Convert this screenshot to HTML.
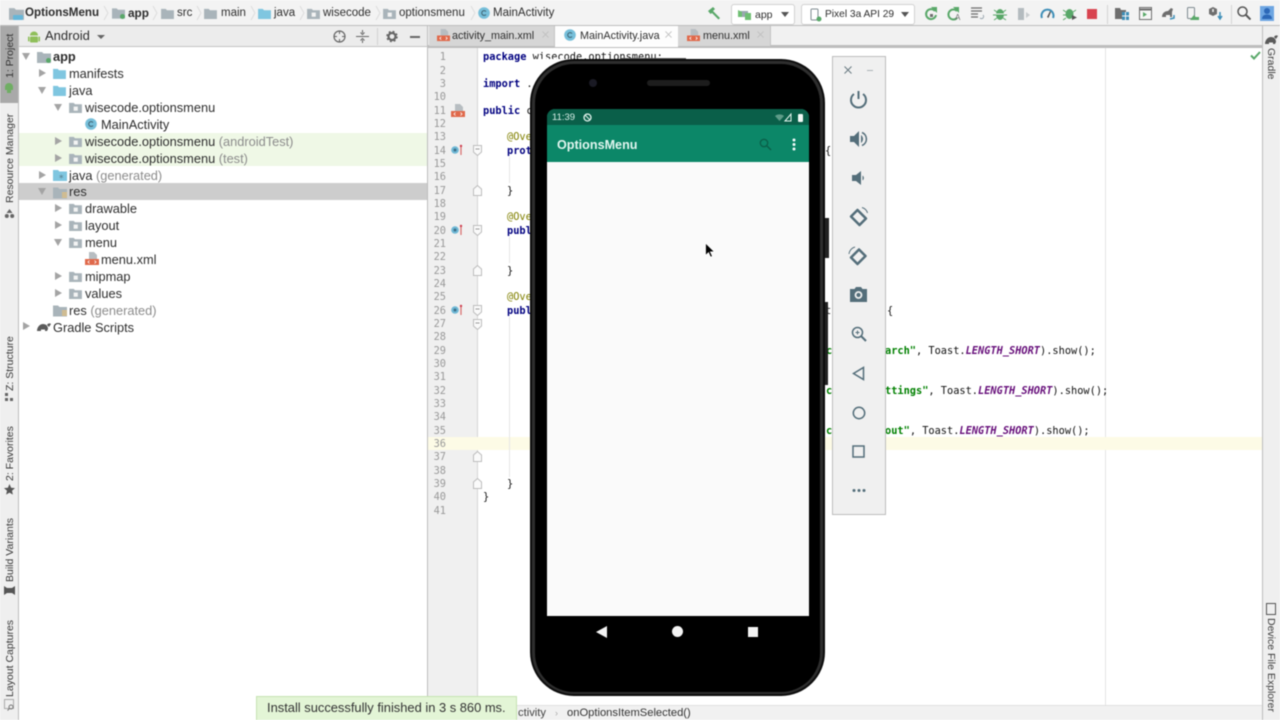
<!DOCTYPE html>
<html><head><meta charset="utf-8"><title>OptionsMenu</title>
<style>
*{box-sizing:border-box}
html,body{margin:0;padding:0;width:1280px;height:720px;overflow:hidden;background:#fff}
body{position:relative;font-family:"Liberation Sans","DejaVu Sans",sans-serif;font-size:11.5px;color:#2e2e2e}
#r{position:absolute;left:0;top:0;width:1280px;height:720px;overflow:hidden;filter:blur(.4px)}
.a,.t,.c,.n,svg.i{position:absolute}
.t{white-space:nowrap;line-height:14px;height:14px}
.b{font-weight:bold}
.g{color:#8c8c8c}
.tree .t{font-size:12.800px;margin-top:1px}
.c{font-family:"DejaVu Sans Mono","Liberation Mono",monospace;font-size:10.3px;line-height:13px;white-space:pre;color:#111;margin-top:1px}
.k{color:#000080;font-weight:bold}
.an{color:#808000}
.s{color:#008000;font-weight:bold}
.f{color:#660e7a;font-style:italic;font-weight:bold}
.n{font-family:"DejaVu Sans Mono","Liberation Mono",monospace;font-size:10.3px;line-height:13px;color:#999;left:428px;width:18px;text-align:right;margin-top:1px}
.v{position:absolute;white-space:nowrap;transform:rotate(-90deg);transform-origin:0 0;line-height:14px;font-size:10.5px;color:#3a3a3a}
.v2{position:absolute;white-space:nowrap;transform:rotate(90deg);transform-origin:0 0;line-height:14px;font-size:10.5px;color:#3a3a3a}
.tab{position:absolute;top:26px;height:20px;background:#d6d6d6;border-right:1px solid #c4c4c4}
.tri{position:absolute;width:0;height:0}
.r{border-left:7px solid #a4a4a4;border-top:4px solid transparent;border-bottom:4px solid transparent}
.d{border-top:7px solid #a4a4a4;border-left:4px solid transparent;border-right:4px solid transparent}
</style></head><body><div id="r">
<svg width="0" height="0" style="position:absolute"><defs>
<symbol id="fb" viewBox="0 0 14 12"><path d="M0 1h5l1.500 1.500H14V12H0z" fill="#7fc6e0"/></symbol>
<symbol id="fg" viewBox="0 0 14 12"><path d="M0 1h5l1.500 1.500H14V12H0z" fill="#a9b4ba"/></symbol>
<symbol id="fp" viewBox="0 0 14 12"><path d="M0 1h5l1.500 1.500H14V12H0z" fill="#a9b4ba"/><rect x="5" y="5" width="4.500" height="4.500" fill="#f4f4f4"/></symbol>
<symbol id="cc" viewBox="0 0 12 12"><circle cx="6" cy="6" r="5.800" fill="#76bfda"/><path d="M8 4.500A2.400 2.400 0 1 0 8 7.500" fill="none" stroke="#3d6170" stroke-width="1"/></symbol>
<symbol id="xm" viewBox="0 0 14 14"><path d="M4 0h5l3 3v4H4z" fill="#b7bdc1"/><rect x="0" y="7" width="14" height="6" fill="#e0694b"/><path d="M4.500 8.500L3 10l1.500 1.500M9.500 8.500L11 10l-1.500 1.500" fill="none" stroke="#fff" stroke-width=".8"/></symbol>
<symbol id="ov" viewBox="0 0 12 12"><circle cx="4" cy="6" r="3.800" fill="#6fb8d6"/><circle cx="4" cy="6" r="1.500" fill="#3c6f88"/><path d="M10 3v8" stroke="#d76b6b" stroke-width="1.200"/><circle cx="10" cy="2" r="1.200" fill="#cf3f4f"/></symbol>
<symbol id="fd" viewBox="0 0 9 11"><path d="M.5.500h8V7l-4 3.500-4-3.500z" fill="#fafafa" stroke="#bdbdbd"/><path d="M2.500 4h4" stroke="#999"/></symbol>
<symbol id="fu" viewBox="0 0 9 11"><path d="M.5 10.500h8V4L4.500.5.500 4z" fill="#fafafa" stroke="#bdbdbd"/></symbol>
<symbol id="chev" viewBox="0 0 6 16"><path d="M1 1l4 7-4 7" fill="none" stroke="#dcdcdc"/></symbol>
<symbol id="cx" viewBox="0 0 8 8"><path d="M.5.500l7 7M7.500.500l-7 7" stroke="#c0c0c0"/></symbol>
</defs></svg>

<!-- nav bar -->
<div class="a" style="left:0;top:0;width:1280px;height:26px;background:#f3f3f3;border-bottom:1px solid #bdbdbd"></div>
<svg class="i" style="left:9px;top:7px" width="15" height="13"><use href="#fg"/><rect x="4" y="8" width="10" height="5" rx="1" fill="#66b6d8"/></svg>
<div class="t b" style="left:25px;top:6px;font-size:11.600px">OptionsMenu</div>
<svg class="i" style="left:103px;top:5px" width="6" height="16"><use href="#chev"/></svg>
<svg class="i" style="left:112px;top:7px" width="13" height="12"><use href="#fg"/><circle cx="10.500" cy="9.500" r="2.500" fill="#59a869"/></svg>
<div class="t b" style="left:128px;top:6px;font-size:11.800px">app</div>
<svg class="i" style="left:152px;top:5px" width="6" height="16"><use href="#chev"/></svg>
<svg class="i" style="left:161px;top:8px" width="13" height="11"><use href="#fg"/></svg>
<div class="t" style="left:177px;top:6px">src</div>
<svg class="i" style="left:196px;top:5px" width="6" height="16"><use href="#chev"/></svg>
<svg class="i" style="left:204px;top:8px" width="13" height="11"><use href="#fg"/></svg>
<div class="t" style="left:221px;top:6px">main</div>
<svg class="i" style="left:250px;top:5px" width="6" height="16"><use href="#chev"/></svg>
<svg class="i" style="left:258px;top:8px" width="13" height="11"><use href="#fb"/></svg>
<div class="t" style="left:274px;top:6px">java</div>
<svg class="i" style="left:299px;top:5px" width="6" height="16"><use href="#chev"/></svg>
<svg class="i" style="left:307px;top:8px" width="13" height="11"><use href="#fp"/></svg>
<div class="t" style="left:323px;top:6px">wisecode</div>
<svg class="i" style="left:375px;top:5px" width="6" height="16"><use href="#chev"/></svg>
<svg class="i" style="left:383px;top:8px" width="13" height="11"><use href="#fp"/></svg>
<div class="t" style="left:399px;top:6px">optionsmenu</div>
<svg class="i" style="left:470px;top:5px" width="6" height="16"><use href="#chev"/></svg>
<svg class="i" style="left:478px;top:7px" width="12" height="12"><use href="#cc"/></svg>
<div class="t" style="left:493px;top:6px">MainActivity</div>

<!-- toolbar -->
<svg class="i" style="left:707px;top:6px" width="15" height="14"><path d="M1 5L6 1l2 2-2 2 7 7-1.500 1.500L5 7 3.500 8z" fill="#59a869"/></svg>
<div class="a" style="left:731px;top:4px;width:64px;height:21px;background:#fff;border:1px solid #d0d0d0;border-radius:3px"></div>
<svg class="i" style="left:738px;top:9px" width="13" height="11"><path d="M1 2h9v6H1z" fill="#9aa7b0"/><path d="M0 1l4 2v5H0zM7 4h6v7H7z" fill="#6fbf73"/></svg>
<div class="t" style="left:755px;top:8px;font-size:10.500px">app</div>
<div class="tri d" style="left:781px;top:12px;border-top-color:#555;border-top-width:5px"></div>
<div class="a" style="left:801px;top:4px;width:114px;height:21px;background:#fff;border:1px solid #d0d0d0;border-radius:3px"></div>
<svg class="i" style="left:810px;top:8px" width="12" height="14"><rect x="1" y="1" width="7" height="11" rx="1" fill="none" stroke="#7f8b91"/><circle cx="9" cy="11" r="2.500" fill="#59a869"/></svg>
<div class="t" style="left:825px;top:8px;font-size:10.200px">Pixel 3a API 29</div>
<div class="tri d" style="left:901px;top:12px;border-top-color:#555;border-top-width:5px"></div>
<svg class="i" style="left:924px;top:6px" width="14" height="15"><path d="M11 5a5 5 0 1 0 1 4" fill="none" stroke="#59a869" stroke-width="2"/><path d="M7 1l6 0 0 6z" fill="#59a869"/><rect x="6" y="8" width="3" height="3" fill="#6e6e6e"/></svg>
<svg class="i" style="left:947px;top:6px" width="15" height="15"><path d="M10 5a5 5 0 1 0 0 7" fill="none" stroke="#59a869" stroke-width="2"/><path d="M6 1l6 0 0 6z" fill="#59a869"/><text x="8" y="14" font-size="8" fill="#6e6e6e" font-family="Liberation Sans">A</text></svg>
<svg class="i" style="left:970px;top:7px" width="15" height="13"><path d="M1 1h11M1 4h11M1 7h7M1 10h7" stroke="#6e6e6e" stroke-width="1.300"/><path d="M10 11a2 2 0 1 0 3-3" fill="none" stroke="#9aa7b0"/></svg>
<svg class="i" style="left:993px;top:6px" width="14" height="15"><ellipse cx="7" cy="8.500" rx="4" ry="5.500" fill="#59a869"/><path d="M1 4l3 2M13 4l-3 2M0 9h3M11 9h3M1 14l3-2M13 14l-3-2" stroke="#59a869"/><path d="M3 8h8" stroke="#f3f3f3"/></svg>
<svg class="i" style="left:1017px;top:7px" width="14" height="14"><path d="M1 1h6v12H1z" fill="#b4bbbf"/><path d="M9 5l4 3-4 3z" fill="#c8cccf"/></svg>
<svg class="i" style="left:1040px;top:7px" width="15" height="12"><path d="M2 11a6 6 0 1 1 11 0" fill="none" stroke="#3f8fb8" stroke-width="2"/><path d="M7 10l3-6 1 1-2.500 6z" fill="#555"/></svg>
<svg class="i" style="left:1063px;top:6px" width="15" height="15"><ellipse cx="6.500" cy="8" rx="4" ry="5" fill="#59a869"/><path d="M0 4l3 2M13 4l-3 2M0 9h3M0 14l3-2" stroke="#59a869"/><path d="M9 9l5 2.500L9 14z" fill="#555"/></svg>
<div class="a" style="left:1087px;top:9px;width:10px;height:10px;background:#d8434f"></div>
<div class="a" style="left:1107px;top:5px;width:1px;height:19px;background:#d4d4d4"></div>
<svg class="i" style="left:1115px;top:7px" width="14" height="13"><path d="M0 1h5l1 2h5v9H0z" fill="#6e6e6e"/><rect x="7" y="5" width="7" height="8" fill="#3f8fb8"/><path d="M7 9h7M10.500 5v8" stroke="#f3f3f3"/></svg>
<svg class="i" style="left:1139px;top:7px" width="13" height="13"><rect x=".5" y=".5" width="12" height="12" fill="#f6f6f6" stroke="#6e6e6e"/><path d="M0 2.500h13" stroke="#6e6e6e" stroke-width="2"/><path d="M4 5l4 2.500L4 10z" fill="#59a869"/></svg>
<svg class="i" style="left:1161px;top:6px" width="15" height="15"><path d="M1 11c0-4 3-6 6-6l3-3 2 1-1 3v5H9V9H5v2z" fill="#6e6e6e"/><path d="M9 13l4-1 0-3" fill="none" stroke="#3f8fb8" stroke-width="1.500"/></svg>
<svg class="i" style="left:1185px;top:6px" width="14" height="15"><rect x="2.500" y="1.500" width="7" height="11" rx="1" fill="none" stroke="#7f8b91"/><path d="M5 14l4-5 4 5z" fill="#59a869"/><rect x="7" y="11" width="7" height="3" fill="#59a869"/></svg>
<svg class="i" style="left:1208px;top:6px" width="15" height="15"><path d="M1 3l4-2 4 2v5l-4 2-4-2z" fill="#6e6e6e"/><path d="M5 3v3" stroke="#f3f3f3" stroke-width="1.500"/><path d="M12 6v6M10 10l2 3 2-3" fill="none" stroke="#3f8fb8" stroke-width="1.500"/></svg>
<div class="a" style="left:1231px;top:5px;width:1px;height:19px;background:#d4d4d4"></div>
<svg class="i" style="left:1237px;top:6px" width="14" height="14"><circle cx="5.500" cy="5.500" r="4.500" fill="none" stroke="#555" stroke-width="1.500"/><path d="M9 9l4.500 4.500" stroke="#555" stroke-width="2"/></svg>
<svg class="i" style="left:1260px;top:6px" width="14" height="15"><rect width="14" height="15" fill="#6ea6e2"/><circle cx="7" cy="5" r="3" fill="#2c68b8"/><path d="M2 13c0-3 2-4.500 5-4.500s5 1.500 5 4.500z" fill="#2c68b8"/></svg>

<!-- left tool strip -->
<div class="a" style="left:0;top:26px;width:19px;height:694px;background:#efefef;border-right:1px solid #bdbdbd"></div>
<div class="a" style="left:0;top:26px;width:18px;height:77px;background:#a9a9a9"></div>
<div class="v" style="left:3px;top:78px;color:#333">1: Project</div>
<svg class="i" style="left:4px;top:82px" width="10" height="12"><path d="M1 5a4 4 0 0 1 8 0v3H1z" fill="#6fae63"/><rect x="3" y="8" width="4" height="3" fill="#6fae63"/></svg>
<div class="v" style="left:3px;top:203px">Resource Manager</div>
<svg class="i" style="left:4px;top:208px" width="11" height="11"><path d="M5.500 1l3 4h-6z" fill="#666"/><circle cx="2.800" cy="8" r="2" fill="#666"/><circle cx="8.200" cy="8" r="2" fill="#666"/></svg>
<div class="v" style="left:3px;top:391px">Z: Structure</div>
<svg class="i" style="left:5px;top:393px" width="9" height="11"><rect x="0" y="0" width="3" height="3" fill="#666"/><rect x="0" y="5" width="3" height="3" fill="#666"/><rect x="5" y="5" width="3" height="3" fill="#666"/></svg>
<div class="v" style="left:3px;top:481px">2: Favorites</div>
<svg class="i" style="left:4px;top:484px" width="11" height="11"><path d="M5.500 0l1.600 3.700 3.900.4-3 2.600.9 3.900-3.400-2-3.400 2 .9-3.900-3-2.600 3.900-.4z" fill="#555"/></svg>
<div class="v" style="left:3px;top:582px">Build Variants</div>
<svg class="i" style="left:4px;top:586px" width="11" height="9"><path d="M0 0l3 2h5l3-2v9l-3-2H3L0 9z" fill="#555"/></svg>
<div class="v" style="left:3px;top:697px">Layout Captures</div>
<svg class="i" style="left:4px;top:699px" width="11" height="12"><rect x=".5" y=".5" width="9" height="9" fill="none" stroke="#aaa"/><circle cx="7" cy="8" r="2" fill="none" stroke="#777"/><path d="M5.500 9.500l-2 2" stroke="#777"/></svg>

<!-- project panel -->
<div class="a" style="left:19px;top:26px;width:408px;height:21px;background:#ececec;border-bottom:1px solid #c4c4c4"></div>
<svg class="i" style="left:28px;top:30px" width="12" height="14"><path d="M2 5.500a4 4 0 0 1 8 0z" fill="#8fbf5a"/><rect x="2" y="6.500" width="8" height="6" rx="1" fill="#8fbf5a"/><rect x="0" y="6.500" width="1.500" height="5" rx=".7" fill="#8fbf5a"/><rect x="10.500" y="6.500" width="1.500" height="5" rx=".7" fill="#8fbf5a"/></svg>
<div class="t" style="left:45px;top:29px;font-size:13px">Android</div>
<div class="tri d" style="left:97px;top:35px;border-top-color:#666;border-top-width:4px"></div>
<svg class="i" style="left:333px;top:30px" width="13" height="13"><circle cx="6.500" cy="6.500" r="5.500" fill="none" stroke="#666" stroke-width="1.200"/><path d="M6.500 1v3M6.500 9v3M1 6.500h3M9 6.500h3" stroke="#666"/></svg>
<svg class="i" style="left:356px;top:30px" width="13" height="13"><path d="M0 6.500h13" stroke="#666"/><path d="M6.500 0v3M4.500 2.500l2 2 2-2M6.500 13v-3M4.500 10.500l2-2 2 2" fill="none" stroke="#666"/></svg>
<div class="a" style="left:377px;top:28px;width:1px;height:17px;background:#d2d2d2"></div>
<svg class="i" style="left:386px;top:30px" width="12" height="13"><circle cx="6" cy="6.500" r="3.500" fill="none" stroke="#666" stroke-width="2.200"/><circle cx="6" cy="6.500" r="5" fill="none" stroke="#666" stroke-width="1.500" stroke-dasharray="2 2"/></svg>
<div class="a" style="left:410px;top:36px;width:10px;height:1.500px;background:#666"></div>
<div class="a" style="left:427px;top:26px;width:1px;height:694px;background:#bdbdbd"></div>

<!-- tree -->
<div class="a" style="left:19px;top:133px;width:408px;height:33px;background:#eff8e6"></div>
<div class="a" style="left:19px;top:183px;width:408px;height:17px;background:#cdcdcd"></div>
<div class="tree">
<div class="tri d" style="left:22px;top:53px"></div>
<svg class="i" style="left:37px;top:51px" width="14" height="12"><use href="#fg"/><circle cx="11.500" cy="9.500" r="2.500" fill="#59a869"/></svg>
<div class="t b" style="left:53px;top:49px">app</div>
<div class="tri r" style="left:39px;top:69px"></div>
<svg class="i" style="left:53px;top:68px" width="13" height="11"><use href="#fb"/></svg>
<div class="t" style="left:69px;top:66px">manifests</div>
<div class="tri d" style="left:38px;top:87px"></div>
<svg class="i" style="left:53px;top:85px" width="13" height="11"><use href="#fb"/></svg>
<div class="t" style="left:69px;top:83px">java</div>
<div class="tri d" style="left:54px;top:104px"></div>
<svg class="i" style="left:69px;top:102px" width="13" height="11"><use href="#fp"/></svg>
<div class="t" style="left:85px;top:100px">wisecode.optionsmenu</div>
<svg class="i" style="left:85px;top:118px" width="12" height="12"><use href="#cc"/></svg>
<div class="t" style="left:101px;top:117px">MainActivity</div>
<div class="tri r" style="left:55px;top:137px"></div>
<svg class="i" style="left:69px;top:136px" width="13" height="11"><use href="#fp"/></svg>
<div class="t" style="left:85px;top:134px">wisecode.optionsmenu <span class="g">(androidTest)</span></div>
<div class="tri r" style="left:55px;top:154px"></div>
<svg class="i" style="left:69px;top:153px" width="13" height="11"><use href="#fp"/></svg>
<div class="t" style="left:85px;top:151px">wisecode.optionsmenu <span class="g">(test)</span></div>
<div class="tri r" style="left:39px;top:171px"></div>
<svg class="i" style="left:53px;top:169px" width="14" height="12"><use href="#fb"/><text x="6" y="12" font-size="9" fill="#5a7d8c" font-family="DejaVu Sans">*</text></svg>
<div class="t" style="left:69px;top:168px">java <span class="g">(generated)</span></div>
<div class="tri d" style="left:38px;top:188px"></div>
<svg class="i" style="left:53px;top:186px" width="14" height="13"><use href="#fg"/><path d="M9 7h5M9 9h5M9 11h5" stroke="#e6c07b" stroke-width="1.300"/></svg>
<div class="t" style="left:69px;top:184px">res</div>
<div class="tri r" style="left:55px;top:204px"></div>
<svg class="i" style="left:69px;top:203px" width="13" height="11"><use href="#fp"/></svg>
<div class="t" style="left:85px;top:201px">drawable</div>
<div class="tri r" style="left:55px;top:221px"></div>
<svg class="i" style="left:69px;top:220px" width="13" height="11"><use href="#fp"/></svg>
<div class="t" style="left:85px;top:218px">layout</div>
<div class="tri d" style="left:54px;top:239px"></div>
<svg class="i" style="left:69px;top:237px" width="13" height="11"><use href="#fp"/></svg>
<div class="t" style="left:85px;top:235px">menu</div>
<svg class="i" style="left:85px;top:252px" width="14" height="14"><use href="#xm"/></svg>
<div class="t" style="left:101px;top:252px">menu.xml</div>
<div class="tri r" style="left:55px;top:272px"></div>
<svg class="i" style="left:69px;top:271px" width="13" height="11"><use href="#fp"/></svg>
<div class="t" style="left:85px;top:269px">mipmap</div>
<div class="tri r" style="left:55px;top:289px"></div>
<svg class="i" style="left:69px;top:288px" width="13" height="11"><use href="#fp"/></svg>
<div class="t" style="left:85px;top:286px">values</div>
<svg class="i" style="left:53px;top:304px" width="14" height="13"><use href="#fg"/><path d="M9 7h5M9 9h5M9 11h5" stroke="#e6c07b" stroke-width="1.300"/></svg>
<div class="t" style="left:69px;top:303px">res <span class="g">(generated)</span></div>
<div class="tri r" style="left:23px;top:322px"></div>
<svg class="i" style="left:37px;top:321px" width="14" height="11"><path d="M0 10c0-4 3-7 6-7s5 2 5 5l-1 2H8V8.500H4V10z" fill="#5a5a5a"/><path d="M10 4c1-2 3-2 4-1l-2 3z" fill="#5a5a5a"/></svg>
<div class="t" style="left:53px;top:320px">Gradle Scripts</div>
</div>

<!-- tabs -->
<div class="a" style="left:428px;top:26px;width:834px;height:21px;background:#f1f1f1;border-bottom:2px solid #bdbdbd"></div>
<div class="tab" style="left:429px;width:126px"><svg class="i" style="left:8px;top:3px" width="13" height="13"><use href="#xm"/></svg><div class="t" style="left:23px;top:3px;font-size:10.800px">activity_main.xml</div></div>
<svg class="i" style="left:542px;top:31px" width="7" height="7"><use href="#cx"/></svg>
<div class="a" style="left:555px;top:26px;width:123px;height:21px;background:#fdfdfd;border-bottom:2px solid #fff"></div>
<svg class="i" style="left:564px;top:29px" width="12" height="12"><use href="#cc"/></svg>
<div class="t" style="left:580px;top:29px;font-size:10.800px">MainActivity.java</div>
<svg class="i" style="left:665px;top:31px" width="7" height="7"><use href="#cx"/></svg>
<div class="tab" style="left:678px;width:93px"><svg class="i" style="left:9px;top:3px" width="13" height="13"><use href="#xm"/></svg><div class="t" style="left:25px;top:3px;font-size:10.800px">menu.xml</div></div>
<svg class="i" style="left:757px;top:31px" width="7" height="7"><use href="#cx"/></svg>

<!-- editor -->
<div class="a" style="left:428px;top:47px;width:834px;height:658px;background:#fff;border-top:1px solid #bdbdbd"></div>
<div class="a" style="left:428px;top:48px;width:50px;height:657px;background:#f0f0f0;border-right:1px solid #d6d6d6"></div>
<div class="a" style="left:1105px;top:48px;width:1px;height:657px;background:#e4e4e4"></div>
<div class="a" style="left:428px;top:437px;width:834px;height:13px;background:#fdfbe6"></div>
<div class="a" style="left:509px;top:157px;width:1px;height:26px;background:#e6e6e6"></div>
<div class="a" style="left:509px;top:237px;width:1px;height:26px;background:#e6e6e6"></div>
<div class="a" style="left:509px;top:317px;width:1px;height:160px;background:#e6e6e6"></div>
<div class="n" style="top:50px">1</div><div class="n" style="top:64px">2</div><div class="n" style="top:77px">3</div><div class="n" style="top:90px">10</div><div class="n" style="top:104px">11</div><div class="n" style="top:117px">12</div><div class="n" style="top:130px">13</div><div class="n" style="top:144px">14</div><div class="n" style="top:157px">15</div><div class="n" style="top:170px">16</div><div class="n" style="top:184px">17</div><div class="n" style="top:197px">18</div><div class="n" style="top:210px">19</div><div class="n" style="top:224px">20</div><div class="n" style="top:237px">21</div><div class="n" style="top:250px">22</div><div class="n" style="top:264px">23</div><div class="n" style="top:277px">24</div><div class="n" style="top:290px">25</div><div class="n" style="top:304px">26</div><div class="n" style="top:317px">27</div><div class="n" style="top:330px">28</div><div class="n" style="top:344px">29</div><div class="n" style="top:357px">30</div><div class="n" style="top:370px">31</div><div class="n" style="top:384px">32</div><div class="n" style="top:397px">33</div><div class="n" style="top:410px">34</div><div class="n" style="top:424px">35</div><div class="n" style="top:437px">36</div><div class="n" style="top:450px">37</div><div class="n" style="top:464px">38</div><div class="n" style="top:477px">39</div><div class="n" style="top:490px">40</div><div class="n" style="top:504px">41</div>
<svg class="i" style="left:451px;top:104px" width="14" height="14"><use href="#xm"/></svg>
<svg class="i" style="left:451px;top:144px" width="12" height="12"><use href="#ov"/></svg>
<svg class="i" style="left:451px;top:224px" width="12" height="12"><use href="#ov"/></svg>
<svg class="i" style="left:451px;top:304px" width="12" height="12"><use href="#ov"/></svg>
<svg class="i" style="left:473px;top:145px" width="9" height="11"><use href="#fd"/></svg>
<svg class="i" style="left:473px;top:185px" width="9" height="11"><use href="#fu"/></svg>
<svg class="i" style="left:473px;top:225px" width="9" height="11"><use href="#fd"/></svg>
<svg class="i" style="left:473px;top:265px" width="9" height="11"><use href="#fu"/></svg>
<svg class="i" style="left:473px;top:305px" width="9" height="11"><use href="#fd"/></svg>
<svg class="i" style="left:473px;top:319px" width="9" height="11"><use href="#fd"/></svg>
<svg class="i" style="left:473px;top:451px" width="9" height="11"><use href="#fu"/></svg>
<svg class="i" style="left:473px;top:478px" width="9" height="11"><use href="#fu"/></svg>
<div class="c" style="left:483px;top:50px"><span class="k">package</span> wisecode.optionsmenu;</div>
<div class="a" style="left:528px;top:59px;width:160px;height:5px;background:#fff"></div>
<div class="a" style="left:620px;top:58px;width:66px;height:1px;background:#555"></div>
<div class="c" style="left:483px;top:77px"><span class="k">import</span> ...</div>
<div class="c" style="left:483px;top:104px"><span class="k">public</span> class</div>
<div class="c an" style="left:507px;top:130px">@Override</div>
<div class="c k" style="left:507px;top:144px">protected</div>
<div class="c" style="left:507px;top:184px">}</div>
<div class="c an" style="left:507px;top:210px">@Override</div>
<div class="c k" style="left:507px;top:224px">public</div>
<div class="c" style="left:507px;top:264px">}</div>
<div class="c an" style="left:507px;top:290px">@Override</div>
<div class="c k" style="left:507px;top:304px">public</div>
<div class="c" style="left:507px;top:477px">}</div>
<div class="c" style="left:483px;top:490px">}</div>
<div class="c" style="left:825px;top:144px">{</div>
<div class="c" style="left:825px;top:304px">t</div>
<div class="c" style="left:887px;top:304px">{</div>
<div class="c s" style="left:826px;top:344px">cl</div>
<div class="c s" style="left:826px;top:384px">cl</div>
<div class="c s" style="left:826px;top:424px">cl</div>
<div class="c" style="left:885px;top:344px"><span class="s">arch"</span>, Toast.<span class="f">LENGTH_SHORT</span>).show();</div>
<div class="c" style="left:885px;top:384px"><span class="s">ttings"</span>, Toast.<span class="f">LENGTH_SHORT</span>).show();</div>
<div class="c" style="left:885px;top:424px"><span class="s">out"</span>, Toast.<span class="f">LENGTH_SHORT</span>).show();</div>
<svg class="i" style="left:1250px;top:51px" width="11" height="9"><path d="M1 4.500L4 7.500 10 1" fill="none" stroke="#59a869" stroke-width="2"/></svg>

<!-- right strip -->
<div class="a" style="left:1262px;top:26px;width:18px;height:694px;background:#efefef;border-left:1px solid #bdbdbd"></div>
<svg class="i" style="left:1265px;top:34px" width="13" height="11"><path d="M0 10c0-4 3-7 6-7s5 2 5 5l-1 2H8V8.500H4V10z" fill="#5a5a5a"/><path d="M9 3c1-2 3-2 4-1l-2 3z" fill="#5a5a5a"/></svg>
<div class="v2" style="left:1278px;top:48px">Gradle</div>
<svg class="i" style="left:1266px;top:603px" width="10" height="12"><rect x=".5" y=".5" width="9" height="11" fill="none" stroke="#555"/></svg>
<div class="v2" style="left:1278px;top:618px">Device File Explorer</div>

<!-- status -->
<div class="a" style="left:428px;top:705px;width:834px;height:15px;background:#f1f1f1;border-top:1px solid #e0e0e0"></div>
<div class="t" style="left:518px;top:706px;font-size:11.200px;color:#444">ctivity</div>
<div class="t" style="left:555px;top:706px;font-size:9px;color:#aaa">›</div>
<div class="t" style="left:567px;top:706px;font-size:11.200px;color:#333">onOptionsItemSelected()</div>
<div class="a" style="left:256px;top:696px;width:261px;height:24px;background:#e3f5d6;border:1px solid #c6e3b2;border-bottom:none"></div>
<div class="t" style="left:267px;top:701px;font-size:12.900px;color:#333">Install successfully finished in 3 s 860 ms.</div>

<!-- phone -->
<div class="a" style="left:530px;top:59px;width:295px;height:637px;background:#0c0c0c;border-radius:44px"></div>
<div class="a" style="left:532px;top:61px;width:291px;height:633px;background:#2e2e2e;border-radius:42px"></div>
<div class="a" style="left:535px;top:64px;width:285px;height:628px;background:#000;border-radius:39px"></div>
<div class="a" style="left:825px;top:218px;width:4px;height:40px;background:#222"></div>
<div class="a" style="left:825px;top:302px;width:3px;height:83px;background:#222"></div>
<div class="a" style="left:589px;top:79px;width:8px;height:8px;border-radius:50%;background:#1a1a24"></div>
<div class="a" style="left:647px;top:80px;width:63px;height:6px;border-radius:3px;background:#1d1d1d"></div>
<div class="a" style="left:547px;top:109px;width:262px;height:54px;background:#0c8768;border-radius:8px 8px 0 0"></div>
<div class="a" style="left:547px;top:109px;width:262px;height:16px;background:#0a5f49;border-radius:8px 8px 0 0"></div>
<div class="a" style="left:547px;top:162px;width:262px;height:454px;background:#fafafa"></div>
<div class="t" style="left:552px;top:111px;font-size:9.500px;color:#d8efe8">11:39</div>
<svg class="i" style="left:583px;top:113px" width="9" height="9"><circle cx="4.500" cy="4.500" r="3.500" fill="none" stroke="#e4f4ee" stroke-width="1.300"/><path d="M2 2l5 5" stroke="#e4f4ee"/></svg>
<svg class="i" style="left:775px;top:113px" width="31" height="9"><path d="M0 3a7 7 0 0 1 9 0L4.500 8z" fill="#5d9b88"/><path d="M10 8l6-7v7z" fill="none" stroke="#e4f4ee"/><rect x="23" y="1" width="5" height="8" rx="1" fill="#f2faf7"/></svg>
<div class="t" style="left:557px;top:138px;font-size:12.600px;font-weight:bold;color:#e2f6f0">OptionsMenu</div>
<svg class="i" style="left:759px;top:138px" width="13" height="13"><circle cx="5" cy="5" r="3.700" fill="none" stroke="#0a5f49" stroke-width="1.300"/><path d="M8 8l4 4" stroke="#0a5f49" stroke-width="1.500"/></svg>
<svg class="i" style="left:792px;top:138px" width="4" height="13"><circle cx="2" cy="2" r="1.500" fill="#f0fafa"/><circle cx="2" cy="6.500" r="1.500" fill="#f0fafa"/><circle cx="2" cy="11" r="1.500" fill="#f0fafa"/></svg>
<svg class="i" style="left:596px;top:626px" width="11" height="12"><path d="M11 0v12L0 6z" fill="#f4f4f4"/></svg>
<div class="a" style="left:672px;top:626px;width:11px;height:11px;border-radius:50%;background:#f4f4f4"></div>
<div class="a" style="left:748px;top:627px;width:10px;height:10px;background:#f4f4f4"></div>
<svg class="i" style="left:704px;top:242px" width="11" height="17"><path d="M1.500 1v12.500l3-2.800 2 4.500 2-.9-2-4.400h4z" fill="#000" stroke="#fff" stroke-width=".8"/></svg>

<!-- emulator panel -->
<div class="a" style="left:832px;top:56px;width:54px;height:459px;background:#f0f0f0;border:1px solid #bcbcbc"></div>
<svg class="i" style="left:844px;top:66px" width="8" height="8"><path d="M.5.500l7 7M7.500.500l-7 7" stroke="#6a7a82"/></svg>
<div class="a" style="left:867px;top:70px;width:6px;height:1px;background:#aab2b6"></div>
<svg class="i" style="left:849px;top:90px" width="19" height="19"><path d="M5 4a7.500 7.500 0 1 0 9 0" fill="none" stroke="#546e7a" stroke-width="2"/><path d="M9.500 1v8" stroke="#546e7a" stroke-width="2"/></svg>
<svg class="i" style="left:849px;top:130px" width="19" height="18"><path d="M1 6h4l5-5v16l-5-5H1z" fill="#546e7a"/><path d="M12 5a5 5 0 0 1 0 8z" fill="#546e7a"/><path d="M13 2.500a7 7 0 0 1 0 13" fill="none" stroke="#546e7a" stroke-width="1.500"/></svg>
<svg class="i" style="left:852px;top:171px" width="14" height="14"><path d="M0 4h4l5-4v14l-5-4H0z" fill="#546e7a"/><path d="M10.500 4.500a3 3 0 0 1 0 5z" fill="#546e7a"/></svg>
<svg class="i" style="left:849px;top:206px" width="20" height="21"><path d="M2 10.500L8.500 4 17 12.500 10.500 19z" fill="none" stroke="#546e7a" stroke-width="2.500" stroke-linejoin="round"/><path d="M13 1.500a8 8 0 0 1 5.500 5.500" fill="none" stroke="#546e7a"/></svg>
<svg class="i" style="left:848px;top:245px" width="20" height="21"><path d="M3 12.500L11 4.500 17.500 11 9.500 19z" fill="none" stroke="#546e7a" stroke-width="2.500" stroke-linejoin="round"/><path d="M1 9a8 8 0 0 1 6-7" fill="none" stroke="#546e7a"/></svg>
<svg class="i" style="left:850px;top:286px" width="17" height="16"><path d="M0 3h4.500L6 1h5l1.500 2H17v13H0z" fill="#546e7a"/><circle cx="8.500" cy="9" r="3" fill="none" stroke="#f0f0f0" stroke-width="1.800"/></svg>
<svg class="i" style="left:851px;top:326px" width="16" height="16"><circle cx="6.500" cy="6.500" r="5" fill="none" stroke="#546e7a" stroke-width="1.500"/><path d="M10 10l5 5" stroke="#546e7a" stroke-width="2"/><path d="M4.500 6.500h4M6.500 4.500v4" stroke="#546e7a"/></svg>
<svg class="i" style="left:852px;top:366px" width="13" height="15"><path d="M11.500 1.500v12L1.500 7.500z" fill="none" stroke="#546e7a" stroke-width="1.500"/></svg>
<svg class="i" style="left:852px;top:406px" width="14" height="14"><circle cx="7" cy="7" r="5.700" fill="none" stroke="#546e7a" stroke-width="1.500"/></svg>
<svg class="i" style="left:852px;top:445px" width="13" height="13"><rect x="1" y="1" width="11" height="11" fill="none" stroke="#546e7a" stroke-width="1.500"/></svg>
<svg class="i" style="left:852px;top:488px" width="14" height="5"><circle cx="2" cy="2.500" r="1.500" fill="#546e7a"/><circle cx="7" cy="2.500" r="1.500" fill="#546e7a"/><circle cx="12" cy="2.500" r="1.500" fill="#546e7a"/></svg>
</div></body></html>
